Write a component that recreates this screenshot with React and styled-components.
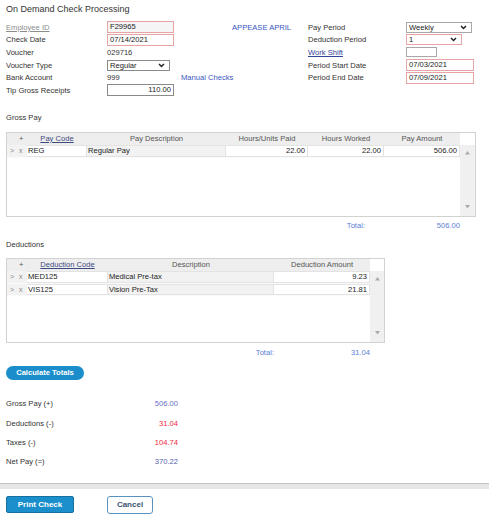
import styled, { createGlobalStyle } from "styled-components";

// Pantalla de cheque bajo demanda: cabecera, grillas de pago y deducciones, totales y pie

const GlobalStyle = createGlobalStyle`
  html, body { margin: 0; padding: 0; background: #fff; }
  body {
    font-family: "Liberation Sans", Arial, sans-serif;
    font-size: 7.6px;
    color: #333;
  }
  * { box-sizing: border-box; }
`;

const grossCols = [20, 60, 139, 82, 76, 76];
const dedCols = [20, 81, 166, 96];

const grossRows = [{ code: "REG", desc: "Regular Pay", paid: "22.00", worked: "22.00", amount: "506.00" }];
const dedRows = [
  { code: "MED125", desc: "Medical Pre-tax", amount: "9.23" },
  { code: "VIS125", desc: "Vision Pre-Tax", amount: "21.81" },
];

const Chevron = () => (
  <svg width="7" height="5" viewBox="0 0 7 5">
    <path d="M1 1 L3.5 3.5 L6 1" fill="none" stroke="#222" strokeWidth="1.5" />
  </svg>
);

const Triangle = ({ down }) => (
  <svg width="5" height="4" viewBox="0 0 5 4">
    <path d={down ? "M0 0 L5 0 L2.5 3.5 Z" : "M0 3.5 L5 3.5 L2.5 0 Z"} fill="#aaa" />
  </svg>
);

const DataGrid = ({ cols, scroll, headers, rows, width }) => {
  const tpl = cols.map((c) => c + "px").join(" ");
  return (
    <GridBox $w={width}>
      <GridRow $cols={`${tpl} ${scroll}px`} $head>
        <HeadCell $plus>+</HeadCell>
        {headers.map((h, i) => (
          <HeadCell key={i} $link={i === 0}>{h}</HeadCell>
        ))}
        <HeadBlank />
      </GridRow>
      <GridBody>
        <RowsArea>
          {rows.map((r, i) => (
            <GridRow key={i} $cols={tpl}>
              <IconCell><span>&gt;</span><span>x</span></IconCell>
              {r.map((c, j) => (
                <Cell key={j} $edit={c.edit} $right={c.right}>{c.text}</Cell>
              ))}
            </GridRow>
          ))}
        </RowsArea>
        <ScrollTrack $w={scroll}>
          <Triangle />
          <Triangle down />
        </ScrollTrack>
      </GridBody>
    </GridBox>
  );
};

const App = () => {
  return (
    <Page>
      <GlobalStyle />
      <Content>
        <Title>On Demand Check Processing</Title>

        <FormGrid>
          <Label $muted>Employee ID</Label>
          <Field $w={67} $tone="pink" $gray>F29965</Field>
          <span />
          <LinkText>APPEASE APRIL</LinkText>
          <Label>Pay Period</Label>
          <Select $w={66}>Weekly<Chevron /></Select>

          <Label>Check Date</Label>
          <Field $w={67} $tone="pink">07/14/2021</Field>
          <span />
          <span />
          <Label>Deduction Period</Label>
          <Select $w={56} $tone="pink">1<Chevron /></Select>

          <Label>Voucher</Label>
          <Value>029716</Value>
          <span />
          <span />
          <Label $shift>Work Shift</Label>
          <Field $w={31} $h={10} />

          <Label>Voucher Type</Label>
          <Select $w={63} $dark>Regular<Chevron /></Select>
          <span />
          <span />
          <Label>Period Start Date</Label>
          <Field $w={68} $tone="pink">07/03/2021</Field>

          <Label>Bank Account</Label>
          <Value>999</Value>
          <LinkText $span>Manual Checks</LinkText>
          <Label>Period End Date</Label>
          <Field $w={68} $tone="pink">07/09/2021</Field>

          <Label>Tip Gross Receipts</Label>
          <Field $w={67} $right $dark>110.00</Field>
        </FormGrid>

        <SectionTitle $top={15.4} $bottom={8}>Gross Pay</SectionTitle>
        <DataGrid
          width={470}
          cols={grossCols}
          scroll={15}
          headers={["Pay Code", "Pay Description", "Hours/Units Paid", "Hours Worked", "Pay Amount"]}
          rows={grossRows.map((r) => [
            { text: r.code, edit: true },
            { text: r.desc },
            { text: r.paid, edit: true, right: true },
            { text: r.worked, edit: true, right: true },
            { text: r.amount, edit: true, right: true },
          ])}
        />
        <TotalsRow $cols={grossCols.map((c) => c + "px").join(" ")} $top={3}>
          <TotalText $col="5" $pad={19}>Total:</TotalText>
          <TotalText $col="6">506.00</TotalText>
        </TotalsRow>

        <SectionTitle $top={7} $bottom={7}>Deductions</SectionTitle>
        <DataGrid
          width={379}
          cols={dedCols}
          scroll={14}
          headers={["Deduction Code", "Description", "Deduction Amount"]}
          rows={dedRows.map((r) => [
            { text: r.code, edit: true },
            { text: r.desc },
            { text: r.amount, edit: true, right: true },
          ])}
        />
        <TotalsRow $cols={dedCols.map((c) => c + "px").join(" ")} $top={4}>
          <TotalText $col="3">Total:</TotalText>
          <TotalText $col="4">31.04</TotalText>
        </TotalsRow>

        <CalcButton>Calculate Totals</CalcButton>

        <Summary>
          <span>Gross Pay (+)</span>
          <Amount $tone="blue">506.00</Amount>
          <span>Deductions (-)</span>
          <Amount $tone="red">31.04</Amount>
          <span>Taxes (-)</span>
          <Amount $tone="red">104.74</Amount>
          <span>Net Pay (=)</span>
          <Amount $tone="navy">370.22</Amount>
        </Summary>
      </Content>

      <FooterBar />
      <Actions>
        <PrintButton>Print Check</PrintButton>
        <CancelButton>Cancel</CancelButton>
      </Actions>
    </Page>
  );
};

export default App;

const Page = styled.div`
  width: 489px;
  min-height: 518px;
  background: #fff;
`;

const Content = styled.div`
  padding: 3px 6px 0 6px;
`;

const Title = styled.div`
  font-size: 9px;
  line-height: 12px;
  color: #333;
`;

const FormGrid = styled.div`
  margin-top: 6px;
  display: grid;
  grid-template-columns: 101px 74px 51px 76px 98px 70px;
  grid-auto-rows: 12.6px;
  align-items: center;
`;

const Label = styled.span`
  white-space: nowrap;
  color: ${(p) => (p.$muted ? "#8c8c8c" : p.$shift ? "#34449a" : "#333")};
  text-decoration: ${(p) => (p.$muted || p.$shift ? "underline" : "none")};
`;

const Value = styled.span`
  color: #333;
`;

const LinkText = styled.span`
  color: #3a56c0;
  white-space: nowrap;
  grid-column: ${(p) => (p.$span ? "span 2" : "auto")};
`;

const toneBorder = (p) =>
  p.$tone === "pink" ? "#e7a4a4" : p.$dark ? "#8a8a8a" : "#a8a8a8";

const Field = styled.div`
  width: ${(p) => p.$w}px;
  height: ${(p) => p.$h || 12}px;
  border: 1px solid ${toneBorder};
  background: ${(p) => (p.$gray ? "#f5f5f5" : "#fff")};
  padding: 0 2px;
  line-height: 10px;
  text-align: ${(p) => (p.$right ? "right" : "left")};
  color: #222;
`;

const Select = styled.div`
  width: ${(p) => p.$w}px;
  height: 11px;
  border: 1px solid ${toneBorder};
  background: #fff;
  padding: 0 4px 0 2px;
  display: flex;
  align-items: center;
  justify-content: space-between;
  color: #222;
  line-height: 9px;
`;

const SectionTitle = styled.div`
  margin-top: ${(p) => p.$top}px;
  margin-bottom: ${(p) => p.$bottom}px;
  line-height: 12px;
  color: #333;
`;

const GridBox = styled.div`
  width: ${(p) => p.$w}px;
  border: 1px solid #d2d2d2;
  background: #fff;
  margin-top: 2px;
`;

const GridRow = styled.div`
  display: grid;
  grid-template-columns: ${(p) => p.$cols};
  height: ${(p) => (p.$head ? 12 : 12.6)}px;
  background: ${(p) => (p.$head ? "#fff" : "#f2f2f2")};
  border-bottom: ${(p) => (p.$head ? "none" : "1px solid #fafafa")};
`;

const HeadCell = styled.div`
  background: #eeeeee;
  text-align: ${(p) => (p.$plus ? "left" : "center")};
  padding-left: ${(p) => (p.$plus ? 12 : 0)}px;
  line-height: 12px;
  white-space: nowrap;
  overflow: hidden;
  text-decoration: ${(p) => (p.$link ? "underline" : "none")};
  color: ${(p) => (p.$link ? "#3d4a80" : "#555")};
`;

const HeadBlank = styled.div`
  background: #fff;
`;

const GridBody = styled.div`
  display: flex;
  height: 71px;
`;

const RowsArea = styled.div`
  flex: 1;
`;

const ScrollTrack = styled.div`
  width: ${(p) => p.$w}px;
  background: #f0f0f0;
  display: flex;
  flex-direction: column;
  align-items: center;
  justify-content: space-between;
  padding: 6px 0 7px;
`;

const IconCell = styled.div`
  display: flex;
  align-items: center;
  gap: 5px;
  padding-left: 3px;
  color: #888;
  font-size: 7px;
`;

const Cell = styled.div`
  background: ${(p) => (p.$edit ? "#fff" : "transparent")};
  border: 1px solid #e3e3e3;
  border-left: none;
  padding: 0 2px 0 1px;
  line-height: 10.6px;
  text-align: ${(p) => (p.$right ? "right" : "left")};
  color: #222;
  white-space: nowrap;
  overflow: hidden;
`;

const TotalsRow = styled.div`
  display: grid;
  grid-template-columns: ${(p) => p.$cols};
  margin-top: ${(p) => p.$top}px;
  line-height: 12px;
  padding-left: 1px;
`;

const TotalText = styled.span`
  grid-column: ${(p) => p.$col};
  grid-row: 1;
  color: #5b7ed8;
  text-align: right;
  padding-right: ${(p) => p.$pad || 0}px;
`;

const CalcButton = styled.button`
  margin-top: 7px;
  display: block;
  height: 14px;
  width: 78px;
  padding: 0;
  border: none;
  border-radius: 8px;
  background: #1b8dcb;
  color: #fff;
  font-family: inherit;
  font-size: 7.6px;
  font-weight: bold;
`;

const Summary = styled.div`
  margin-top: 14.4px;
  display: grid;
  grid-template-columns: 100px 72px;
  grid-auto-rows: 19.3px;
  align-items: center;
  color: #333;
`;

const amountColor = { blue: "#6470c8", red: "#f0283c", navy: "#5262b0" };

const Amount = styled.span`
  text-align: right;
  color: ${(p) => amountColor[p.$tone]};
`;

const FooterBar = styled.div`
  margin-top: 11.4px;
  height: 6px;
  border-top: 1px solid #c4c4c4;
  background: #e6e6e6;
`;

const Actions = styled.div`
  display: flex;
  gap: 33px;
  padding: 7px 6px 0;
`;

const PrintButton = styled.button`
  width: 68px;
  height: 17px;
  padding: 0;
  border: 1px solid #1670a0;
  border-radius: 2px;
  background: #1b8fcb;
  color: #fff;
  font-family: inherit;
  font-size: 8px;
  font-weight: bold;
`;

const CancelButton = styled.button`
  width: 46px;
  height: 18px;
  padding: 0;
  border: 1px solid #5a92bf;
  border-radius: 3px;
  background: #fff;
  color: #3a5470;
  font-family: inherit;
  font-size: 8px;
  font-weight: bold;
`;
